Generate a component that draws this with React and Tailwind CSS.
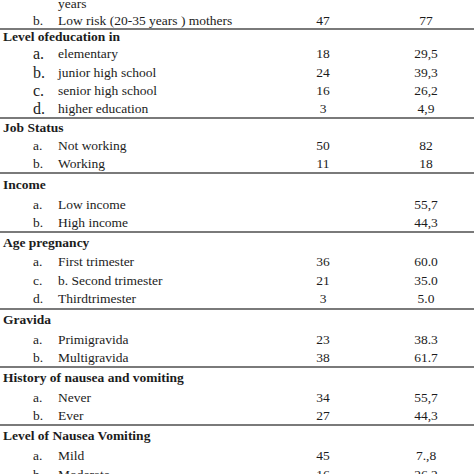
const sections = [
  {
    rows: [
      { label: 'years', h: 20 },
      { letter: 'b.', label: 'Low risk (20-35 years ) mothers', n: '47', p: '77', h: 14 },
    ],
  },
  {
    title: 'Level ofeducation in',
    th: 14,
    big: true,
    rows: [
      { letter: 'a.', label: 'elementary', n: '18', p: '29,5', h: 20 },
      { letter: 'b.', label: 'junior high school', n: '24', p: '39,3', h: 17 },
      { letter: 'c.', label: 'senior high school', n: '16', p: '26,2', h: 19 },
      { letter: 'd.', label: 'higher education', n: '3', p: '4,9', h: 17 },
    ],
  },
  {
    title: 'Job Status',
    th: 18,
    rows: [
      { letter: 'a.', label: 'Not working', n: '50', p: '82', h: 18 },
      { letter: 'b.', label: 'Working', n: '11', p: '18', h: 17 },
    ],
  },
  {
    title: 'Income',
    th: 22,
    rows: [
      { letter: 'a.', label: 'Low income', n: '', p: '55,7', h: 18 },
      { letter: 'b.', label: 'High income', n: '', p: '44,3', h: 17 },
    ],
  },
  {
    title: 'Age pregnancy',
    th: 20,
    rows: [
      { letter: 'a.', label: 'First trimester', n: '36', p: '60.0', h: 18 },
      { letter: 'c.', label: 'b. Second trimester', n: '21', p: '35.0', h: 19 },
      { letter: 'd.', label: 'Thirdtrimester', n: '3', p: '5.0', h: 18 },
    ],
  },
  {
    title: 'Gravida',
    th: 19,
    rows: [
      { letter: 'a.', label: 'Primigravida', n: '23', p: '38.3', h: 21 },
      { letter: 'b.', label: 'Multigravida', n: '38', p: '61.7', h: 16 },
    ],
  },
  {
    title: 'History of nausea and vomiting',
    th: 20,
    rows: [
      { letter: 'a.', label: 'Never', n: '34', p: '55,7', h: 19 },
      { letter: 'b.', label: 'Ever', n: '27', p: '44,3', h: 17 },
    ],
  },
  {
    title: 'Level of Nausea Vomiting',
    th: 20,
    last: true,
    rows: [
      { letter: 'a.', label: 'Mild', n: '45', p: '7.,8', h: 20 },
      { letter: 'b.', label: 'Moderate', n: '16', p: '26,2', h: 18 },
    ],
  },
];

const Row = ({ row, big }) => (
  <div className="grid grid-cols-[268px_110px_96px] items-center" style={{ height: row.h }}>
    <div className="flex items-center">
      <span className={`w-[58px] pl-[33px] shrink-0 ${big ? 'text-[16px] pl-[31px]' : ''}`}>{row.letter}</span>
      <span className="whitespace-nowrap">{row.label}</span>
    </div>
    <div className="text-center">{row.n}</div>
    <div className="text-center">{row.p}</div>
  </div>
);

export default function App() {
  return (
    <div className="w-[474px] h-[474px] overflow-hidden bg-white text-[#1c1c1c] text-[13.5px] leading-none font-['Liberation_Serif',serif]">
      <div className="-mt-[6px]">
        {sections.map((s, i) => (
          <div key={i}>
            {s.title && (
              <div className="flex items-center pl-[3px] font-bold" style={{ height: s.th }}>
                {s.title}
              </div>
            )}
            {s.rows.map((r, j) => (
              <Row key={j} row={r} big={s.big} />
            ))}
            {!s.last && <div className="h-[2px] bg-[#7a7a7a]" />}
          </div>
        ))}
      </div>
    </div>
  );
}
